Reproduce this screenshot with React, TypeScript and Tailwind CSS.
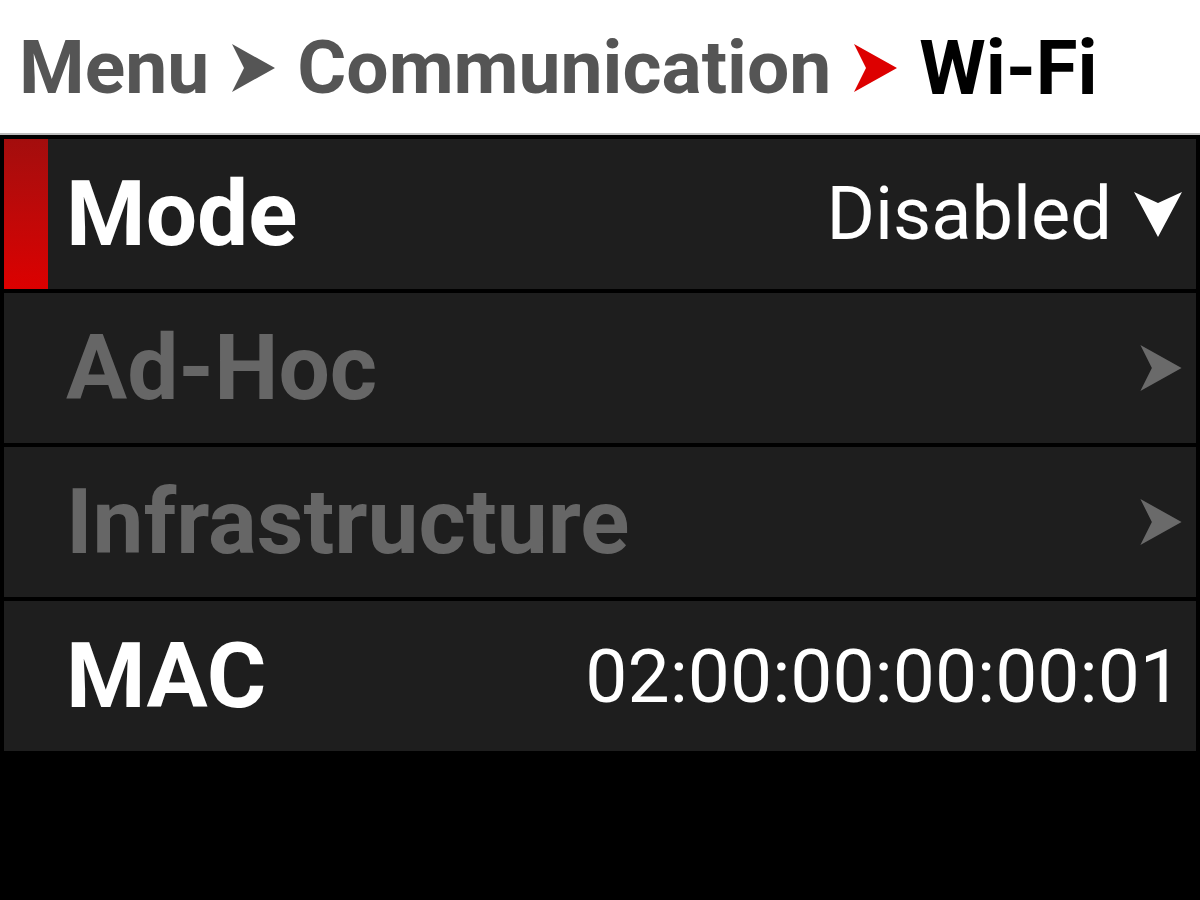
import { ReactNode } from 'react'

const FONT = { fontFamily: 'Roboto, "Liberation Sans", sans-serif' }

function Arrowhead({ className }: { className: string }) {
  return (
    <svg viewBox="0 0 44 48" className={className} fill="currentColor">
      <path d="M1 0 L44 24 L1 48 L13 24 Z" />
    </svg>
  )
}

function DownArrow({ className }: { className: string }) {
  return (
    <svg viewBox="0 0 48 46" className={className} fill="currentColor">
      <path d="M0 1 L24 12 L48 1 L24 46 Z" />
    </svg>
  )
}

function Row({
  label,
  dim,
  active,
  children,
}: {
  label: string
  dim?: boolean
  active?: boolean
  children?: ReactNode
}) {
  return (
    <div className="relative flex h-[150px] items-center justify-between bg-[#1e1e1e] pl-[62px] pr-[14px]">
      {active && (
        <div className="absolute left-0 top-0 h-full w-[44px] bg-gradient-to-b from-[#a30d0d] to-[#dc0000]" />
      )}
      <span
        className={`text-[91px] font-bold leading-none ${dim ? 'text-[#666666]' : 'text-white'}`}
      >
        {label}
      </span>
      {children}
    </div>
  )
}

export default function App() {
  return (
    <div className="flex h-[900px] w-[1200px] flex-col bg-black" style={FONT}>
      <header className="flex h-[133px] items-center gap-[22px] bg-white pl-[19px] pt-[2px] text-[75px] font-bold leading-none">
        <span className="text-[#555555]">Menu</span>
        <Arrowhead className="h-[48px] w-[44px] text-[#555555]" />
        <span className="text-[#555555]">Communication</span>
        <Arrowhead className="h-[48px] w-[44px] text-[#dd0000]" />
        <span className="text-[76px] text-black">Wi-Fi</span>
      </header>
      <div className="h-[2px] bg-[#bdbdbd]" />
      <div className="flex flex-col gap-[4px] px-[4px] pt-[4px]">
        <Row label="Mode" active>
          <div className="flex items-center gap-[22px] text-white">
            <span className="text-[74px] leading-none">Disabled</span>
            <DownArrow className="h-[46px] w-[48px]" />
          </div>
        </Row>
        <Row label="Ad-Hoc" dim>
          <Arrowhead className="h-[46px] w-[43px] text-[#6a6a6a]" />
        </Row>
        <Row label="Infrastructure" dim>
          <Arrowhead className="h-[46px] w-[43px] text-[#6a6a6a]" />
        </Row>
        <Row label="MAC">
          <span className="text-[75px] leading-none text-white">02:00:00:00:00:01</span>
        </Row>
      </div>
    </div>
  )
}
